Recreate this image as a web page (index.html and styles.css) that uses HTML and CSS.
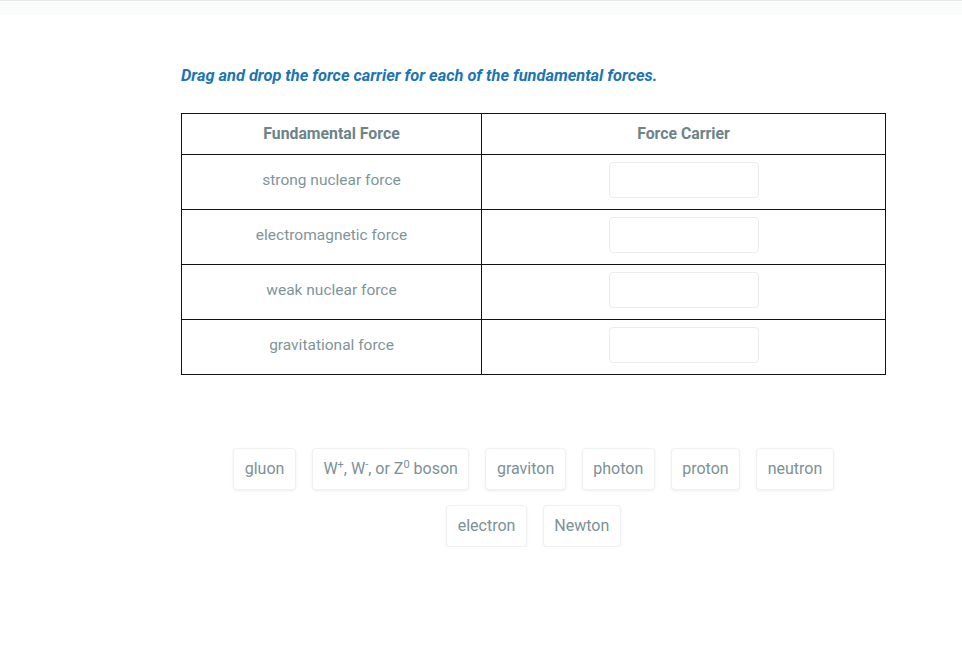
FILE: index.html
```html
<!DOCTYPE html>
<html>
<head>
<meta charset="utf-8">
<link rel="stylesheet" href="styles.css">
</head>
<body>
<div class="topbar"></div>
<main class="content">
  <p class="prompt">Drag and drop the force carrier for each of the fundamental forces.</p>
  <table class="grid">
    <thead>
      <tr><th class="col1">Fundamental Force</th><th>Force Carrier</th></tr>
    </thead>
    <tbody>
      <tr><td class="label">strong nuclear force</td><td class="slot"><div class="drop"></div></td></tr>
      <tr><td class="label">electromagnetic force</td><td class="slot"><div class="drop"></div></td></tr>
      <tr><td class="label">weak nuclear force</td><td class="slot"><div class="drop"></div></td></tr>
      <tr><td class="label">gravitational force</td><td class="slot"><div class="drop"></div></td></tr>
    </tbody>
  </table>
  <div class="bank">
    <span class="chip">gluon</span>
    <span class="chip">W<sup>+</sup>, W<sup>-</sup>, or Z<sup>0</sup> boson</span>
    <span class="chip">graviton</span>
    <span class="chip">photon</span>
    <span class="chip">proton</span>
    <span class="chip">neutron</span>
    <span class="chip">electron</span>
    <span class="chip">Newton</span>
  </div>
</main>
</body>
</html>
```
FILE: styles.css
```css
html, body {
  margin: 0;
  padding: 0;
  background: #ffffff;
}
body {
  font-family: Roboto, "Noto Sans", sans-serif;
  color: #7f9499;
}
.topbar {
  height: 14px;
  background: #fafcfb;
  border-top: 1px solid #e4e9e9;
}
.content {
  width: 705px;
  margin-left: 181px;
}
.prompt {
  margin: 51px 0 0 0;
  font-size: 16.4px;
  line-height: 20px;
  font-weight: 700;
  font-style: italic;
  color: #1b75b4;
}
.grid {
  margin-top: 27px;
  width: 705px;
  border-collapse: collapse;
}
.grid th, .grid td {
  border: 1px solid #111;
  text-align: center;
  padding: 0;
}
.grid th {
  height: 39px;
  font-size: 15.8px;
  font-weight: 700;
  color: #6c838a;
  padding-bottom: 1px;
}
.grid .col1 {
  width: 299px;
}
.grid td {
  height: 55px;
  box-sizing: border-box;
}
.grid .label {
  font-size: 15.5px;
  color: #80959a;
  padding-bottom: 4px;
}
.grid .slot {
  vertical-align: top;
  padding-top: 7px;
}
.drop {
  width: 148px;
  height: 34px;
  margin: 0 auto;
  border: 1px solid #e8eced;
  border-radius: 4px;
  background: #fff;
}
.bank {
  margin: 73px auto 0;
  width: 620px;
  display: flex;
  flex-wrap: wrap;
  justify-content: center;
  align-items: flex-end;
  column-gap: 16px;
  row-gap: 15px;
}
.chip {
  display: inline-block;
  padding: 10px 10.5px;
  font-size: 16px;
  line-height: 20px;
  color: #7b9196;
  background: #fff;
  border: 1px solid #eff1f1;
  border-radius: 4px;
  box-shadow: 0 1px 3px rgba(0, 0, 0, 0.07);
}
.chip sup {
  font-size: 11px;
  line-height: 0;
  vertical-align: 6px;
}
```
